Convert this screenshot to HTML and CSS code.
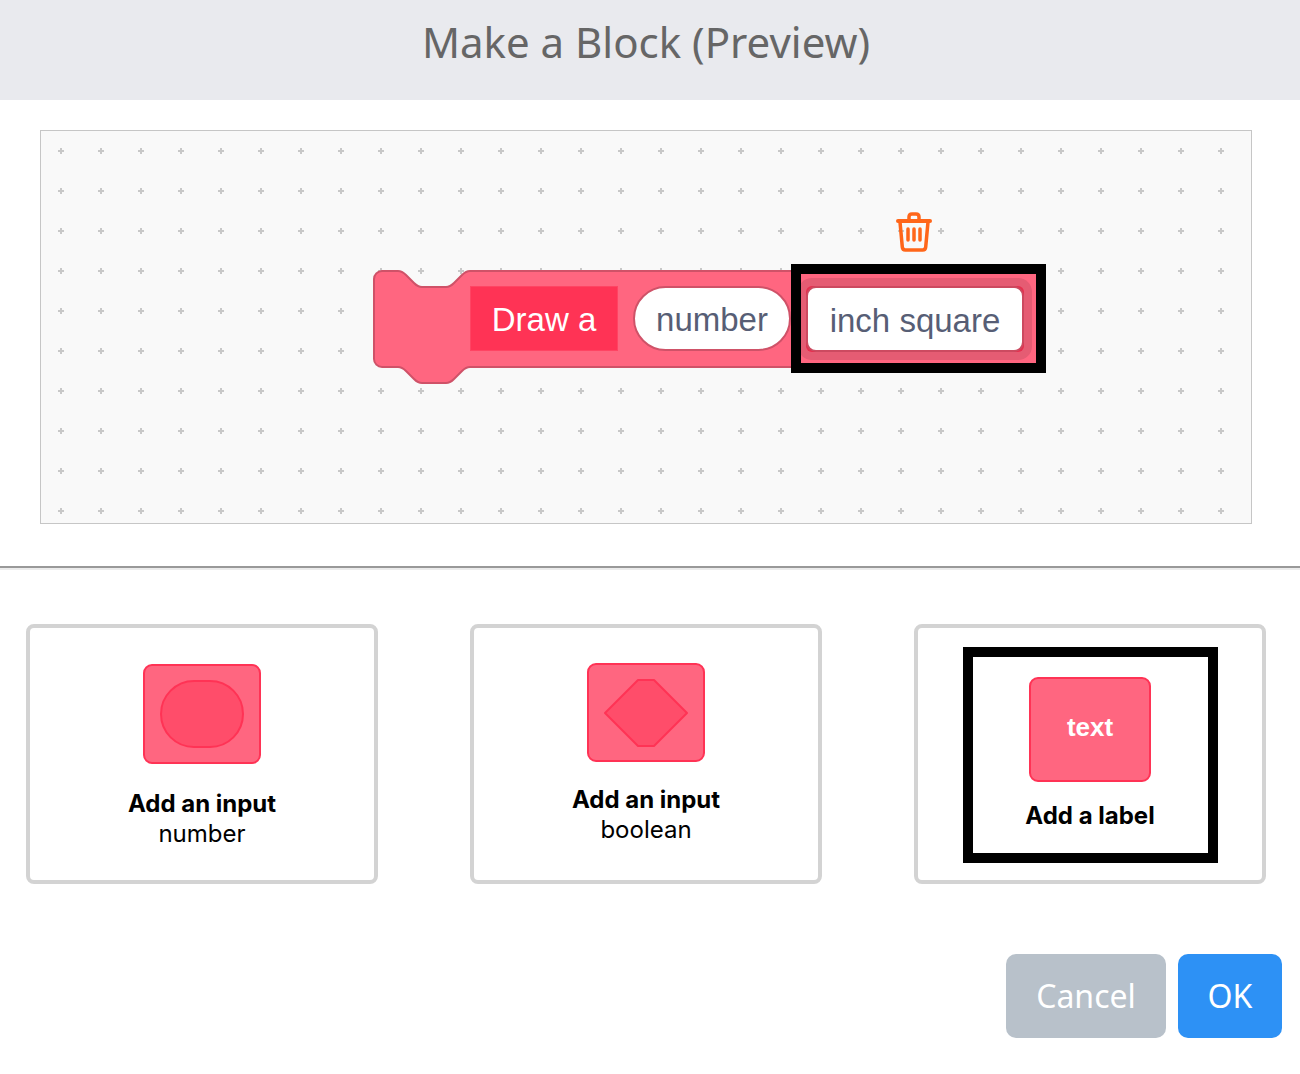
FILE: index.html
```
<!DOCTYPE html>
<html lang="en">
<head>
<meta charset="utf-8">
<meta name="viewport" content="width=device-width, initial-scale=1">
<title>Make a Block (Preview)</title>
<link rel="stylesheet" href="styles.css">
</head>
<body>
<header class="header"><h1 class="title">Make a Block (Preview)</h1></header>
<main>
  <section class="workspace" aria-label="Block preview">
    <svg class="grid" width="100%" height="100%" aria-hidden="true">
      <defs>
        <pattern id="plus" width="40" height="40" patternUnits="userSpaceOnUse">
          <path d="M17 19h6v2h-6zM19 17h2v6h-2z" fill="#c8c8c8"/>
        </pattern>
      </defs>
      <rect width="100%" height="100%" fill="url(#plus)"/>
    </svg>

    <div class="block">
      <svg class="block-shape" width="670" height="116" viewBox="0 0 670 116" aria-hidden="true">
        <path d="M2 10a8 8 0 0 1 8-8H26c4 0 6 2 8 4l8 8c2 2 4 4 8 4h24c4 0 6-2 8-4l8-8c2-2 4-4 8-4H660a8 8 0 0 1 8 8v80a8 8 0 0 1-8 8H98c-4 0-6 2-8 4l-8 8c-2 2-4 4-8 4H50c-4 0-6-2-8-4l-8-8c-2-2-4-4-8-4H10a8 8 0 0 1-8-8z" fill="#ff6680" stroke="#cf5268" stroke-width="2"/>
      </svg>
      <span class="field field-label">Draw a</span>
      <input class="field field-number" type="text" value="number" aria-label="Number input name">
      <div class="field-wrap"><input class="field field-editing" type="text" value="inch square" aria-label="Label text"></div>
      <div class="frame frame-field"></div>
    </div>

    <button class="trash" type="button" aria-label="Delete">
      <svg width="36" height="40" viewBox="0 0 36 40" fill="none" stroke="#ff661a" stroke-linecap="round" stroke-linejoin="round" aria-hidden="true">
        <path d="M2 9h32" stroke-width="4"/>
        <path d="M13 8V5q0-3 3-3h4q3 0 3 3v3M4 10l2.300 25q.3 3 3 3h17.400q2.700 0 3-3l2.300-25" stroke-width="3.500"/>
        <path d="M12 17v11M18 17v11M24 17v11" stroke-width="3.500"/>
      </svg>
    </button>
  </section>

  <hr class="divider">

  <section class="options" aria-label="Add to block">
    <button class="card" type="button">
      <svg width="118" height="110" viewBox="0 0 118 110" aria-hidden="true">
        <rect x="1" y="5" width="116" height="98" rx="8" fill="#ff6680" stroke="#ff3355" stroke-width="2"/>
        <rect x="18" y="21" width="82" height="66" rx="33" fill="#ff4d6a" stroke="#ff3355" stroke-width="2"/>
      </svg>
      <span class="caption"><b>Add an input</b><span>number</span></span>
    </button>
    <button class="card" type="button">
      <svg width="118" height="103" viewBox="0 0 118 103" aria-hidden="true">
        <rect x="1" y="1" width="116" height="97" rx="8" fill="#ff6680" stroke="#ff3355" stroke-width="2"/>
        <path d="M18 50L51 17H67L100 50L67 83H51z" fill="#ff4d6a" stroke="#ff3355" stroke-width="2" stroke-linejoin="round"/>
      </svg>
      <span class="caption"><b>Add an input</b><span>boolean</span></span>
    </button>
    <button class="card" type="button">
      <svg width="122" height="105" viewBox="0 0 122 105" aria-hidden="true">
        <rect x="1" y="1" width="120" height="103" rx="8" fill="#ff6680" stroke="#ff3355" stroke-width="2"/>
        <text class="icon-text" x="61" y="59" text-anchor="middle">text</text>
      </svg>
      <span class="caption"><b>Add a label</b></span>
      <span class="frame frame-card"></span>
    </button>
  </section>
</main>
<footer class="actions">
  <button class="btn btn-cancel" type="button">Cancel</button>
  <button class="btn btn-ok" type="button">OK</button>
</footer>
</body>
</html>
```

FILE: styles.css
```
* {
  box-sizing: border-box;
}

body {
  margin: 0;
  background: #fff;
  color: #000;
  font-family: "Noto Sans", "Open Sans", sans-serif;
}

button,
input {
  font: inherit;
  margin: 0;
  border: 0;
}

button {
  cursor: pointer;
}

.header {
  padding: 12px 8px 28px 0;
  background: #e9eaee;
  text-align: center;
}

.title {
  margin: 0;
  color: #666;
  font-size: 42px;
  font-weight: 400;
  line-height: 60px;
}

.workspace {
  position: relative;
  height: 394px;
  margin: 30px 48px 42px 40px;
  overflow: hidden;
  border: 1px solid #c6c6c6;
  background: #f9f9f9;
}

.grid {
  display: block;
}

/* The block and its delete icon float freely on the workspace. */
.block {
  position: absolute;
  top: 138px;
  left: 331px;
  display: flex;
  width: 670px;
  padding: 17px 16px 0 98px;
  font-family: "Liberation Sans", Arial, sans-serif;
  font-size: 33px;
  line-height: 66px;
}

.block-shape {
  position: absolute;
  top: 0;
  left: 0;
}

.field {
  position: relative;
  height: 65px;
  padding: 0;
  text-align: center;
}

.field-label {
  width: 148px;
  margin-right: 15px;
  border: 1px solid #ff4463;
  background: #ff3355;
  color: #fff;
}

.field-number {
  width: 158px;
  margin-right: 15px;
  padding-top: 2px;
  border: 2px solid #cf5268;
  border-radius: 33px;
  background: #fff;
  color: #575e75;
}

.field-wrap {
  position: relative;
  width: 218px;
  height: 66px;
  background: #e62e4d;
  box-shadow: 0 0 0 8px #e55c73;
  border-radius: 6px;
}

.field-editing {
  display: block;
  width: 100%;
  height: 66px;
  padding-top: 4px;
  border: 2px solid #cc4a60;
  border-radius: 10px;
  background: #fff;
  color: #575e75;
}

.frame {
  position: absolute;
  border: 10px solid #000;
  pointer-events: none;
}

.frame-field {
  top: -5px;
  left: 419px;
  width: 255px;
  height: 109px;
}

.trash {
  position: absolute;
  top: 81px;
  left: 855px;
  padding: 0;
  background: none;
}

.trash svg {
  display: block;
}

.divider {
  height: 4px;
  margin: 0;
  border: 0;
  border-top: 2px solid #999;
  background: #ececec;
}

.options {
  display: grid;
  grid-template-columns: repeat(3, 1fr);
  gap: 92px;
  padding: 54px 34px 70px 26px;
}

.card {
  position: relative;
  display: flex;
  flex-direction: column;
  align-items: center;
  justify-content: center;
  gap: 19px;
  height: 260px;
  padding: 0;
  border: 4px solid #d3d3d3;
  border-radius: 8px;
  background: #fff;
  color: #000;
  font-family: Inter, sans-serif;
  font-size: 24px;
  line-height: 30px;
}

.caption {
  display: flex;
  flex-direction: column;
}

.caption b {
  font-weight: 700;
}

.icon-text {
  fill: #fff;
  font-family: "Liberation Sans", Arial, sans-serif;
  font-size: 26px;
  font-weight: 700;
}

.frame-card {
  inset: 19px 0 17px;
  width: 255px;
  margin: 0 auto;
}

.actions {
  display: flex;
  justify-content: flex-end;
  gap: 12px;
  padding: 0 18px 36px;
}

.btn {
  min-width: 104px;
  padding: 18px 29px;
  border-radius: 10px;
  color: #fff;
  font-size: 32px;
  line-height: 48px;
}

.btn-cancel {
  min-width: 160px;
  background: #b8c1ca;
}

.btn-ok {
  background: #2d91f5;
}
```
